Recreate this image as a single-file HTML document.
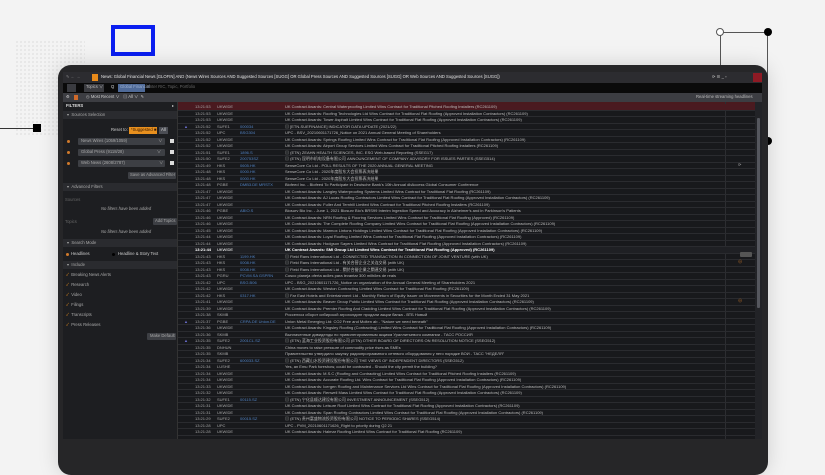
<!DOCTYPE html>
<html><head><meta charset="utf-8"><style>
*{margin:0;padding:0;box-sizing:border-box}
body{width:825px;height:464px;background:#f3f3f3;overflow:hidden;position:relative;font-family:"Liberation Sans","Noto Sans CJK SC",sans-serif}
.a{position:absolute}
.dots{left:15px;top:40px;width:70px;height:95px;background-image:radial-gradient(#c8c8c8 0.6px,transparent 0.8px);background-size:4px 4px}
.frame{left:58px;top:65px;width:710px;height:410px;background:#262628;border-radius:13px;box-shadow:0 0 20px rgba(0,0,0,.15)}
.t{font-size:4.2px;color:#b8b8b8;white-space:nowrap;line-height:6.5px}
.row{position:absolute;left:0;width:577px;height:6.5px;border-bottom:0.5px solid #2a2b2f}
.row span{position:absolute;top:0;font-size:4px;line-height:6.3px;color:#a8a8a8;white-space:nowrap}
.row .tm{left:17px}.row .sr{left:39px}.row .cd{left:62px;color:#4f80c0}.row .hl{left:107px;color:#bcbcbc}
.lp .t{color:#a8a8a8}
.sel{height:7px;background:#3d3f44;border-radius:1px}
</style></head><body>
<div class="a dots"></div>
<div class="a" style="left:111px;top:25px;width:44px;height:31px;border:4px solid #0a1ef0"></div>
<div class="a" style="left:0;top:128px;width:35px;height:1px;background:#333"></div>
<div class="a" style="left:33px;top:124px;width:8px;height:8px;background:#000"></div>
<div class="a" style="left:720px;top:32px;width:1px;height:35px;background:#555"></div>
<div class="a" style="left:720px;top:32px;width:48px;height:1px;background:#555"></div>
<div class="a" style="left:767px;top:32px;width:1px;height:110px;background:#555"></div>
<div class="a" style="left:716px;top:28px;width:8px;height:8px;border:1px solid #555;border-radius:50%;background:#fff"></div>
<div class="a" style="left:764px;top:28px;width:8px;height:8px;background:#000;border-radius:50%"></div>
<div class="a" style="left:764px;top:137px;width:8px;height:8px;background:#000;border-radius:50%"></div>
<div class="a" style="left:755px;top:140px;width:12px;height:1px;background:#555"></div>
<div class="a frame"></div>
<!-- title bar -->
<div class="a" style="left:63px;top:72px;width:699px;height:11px;background:#2c2c30"></div>
<div class="a t" style="left:66px;top:74px;color:#888">✎ ← →</div>
<div class="a" style="left:92px;top:74px;width:6px;height:7px;background:#e88a1a"></div>
<div class="a t" style="left:101px;top:74px;color:#e0e0e0">News: Global Financial News [GLOFIN] AND (News Wires Sources AND Suggested Sources [SUGG] OR Global Press Sources AND Suggested Sources [SUGG] OR Web Sources AND Suggested Sources [SUGG])</div>
<div class="a t" style="left:712px;top:74px;color:#ccc">⟳ ☰ _ ▫</div>
<div class="a" style="left:753px;top:73px;width:9px;height:9px;background:#8e1a24"></div>
<!-- search -->
<div class="a" style="left:63px;top:83px;width:699px;height:10px;background:#0a0a0a"></div>
<div class="a" style="left:67px;top:84px;width:9px;height:8px;background:#3a3b40"></div>
<div class="a" style="left:84px;top:84px;width:20px;height:8px;background:#3a3b40"></div>
<div class="a t" style="left:86px;top:84px;">Topics ∨</div>
<div class="a t" style="left:111px;top:84px;color:#ddd">Q</div>
<div class="a" style="left:118px;top:84px;width:27px;height:8px;background:#4f6a98"></div>
<div class="a t" style="left:120px;top:84px;color:#9bb0d0">Global Financial</div>
<div class="a t" style="left:147px;top:84px;color:#666">Enter RIC, Topic, Portfolio</div>
<!-- toolbar -->
<div class="a" style="left:63px;top:93px;width:699px;height:9px;background:#3c3d42"></div>
<div class="a t" style="left:66px;top:94px;color:#ddd">⚙</div>
<div class="a" style="left:74px;top:95px;width:4px;height:5px;background:#d06a2a"></div>
<div class="a t" style="left:86px;top:94px;color:#ccc">◷ Most Recent ∨ &nbsp; ▤ All ∨ &nbsp;✎</div>
<div class="a t" style="left:696px;top:94px;color:#bbb">Real-time streaming headlines</div>
<!-- left panel -->
<div class="a lp" style="left:63px;top:102px;width:115px;height:337px;background:#1d1e21;border-right:1px solid #333;overflow:hidden">
  <div class="a t" style="left:3px;top:1px;color:#ddd;font-weight:bold">FILTERS</div>
  <div class="a t" style="left:109px;top:1px;color:#ccc">▸</div>
  <div class="a" style="left:0;top:9px;width:115px;height:8px;background:#2a2b2f"></div>
  <div class="a t" style="left:4px;top:10px">▾ &nbsp;Sources Selection</div>
  <div class="a t" style="left:48px;top:25px;color:#ccc">Reset to:</div>
  <div class="a" style="left:66px;top:25px;width:28px;height:7px;background:#e8901e"></div>
  <div class="a t" style="left:68px;top:25px;color:#3a1a00">*Suggested ■</div>
  <div class="a" style="left:96px;top:25px;width:9px;height:7px;background:#4b4d54"></div>
  <div class="a t" style="left:98px;top:25px;color:#ddd">All</div>
  <div class="a" style="left:4px;top:38px;width:3px;height:3px;border-radius:50%;background:#d07a2a"></div>
  <div class="a sel" style="left:15px;top:36px;width:87px"></div><div class="a t" style="left:18px;top:36px">News Wires (1059/1059) <span style="margin-left:30px">∨</span></div>
  <div class="a" style="left:107px;top:37px;width:4px;height:4px;background:#ddd"></div>
  <div class="a" style="left:4px;top:49px;width:3px;height:3px;border-radius:50%;background:#d07a2a"></div>
  <div class="a sel" style="left:15px;top:47px;width:87px"></div><div class="a t" style="left:18px;top:47px">Global Press (9118/28) <span style="margin-left:32px">∨</span></div>
  <div class="a" style="left:107px;top:48px;width:4px;height:4px;background:#ddd"></div>
  <div class="a" style="left:4px;top:60px;width:3px;height:3px;border-radius:50%;background:#d07a2a"></div>
  <div class="a sel" style="left:15px;top:58px;width:87px"></div><div class="a t" style="left:18px;top:58px">Web News (2608/2787) <span style="margin-left:33px">∨</span></div>
  <div class="a" style="left:107px;top:59px;width:4px;height:4px;background:#ddd"></div>
  <div class="a sel" style="left:65px;top:70px;width:48px"></div><div class="a t" style="left:67px;top:70px">Save as Advanced Filter</div>
  <div class="a" style="left:0;top:81px;width:115px;height:8px;background:#2a2b2f"></div>
  <div class="a t" style="left:4px;top:82px">▾ &nbsp;Advanced Filters</div>
  <div class="a t" style="left:2px;top:95px;color:#666">Sources</div>
  <div class="a t" style="left:38px;top:104px;font-style:italic">No filters have been added</div>
  <div class="a t" style="left:2px;top:117px;color:#666">Topics</div>
  <div class="a sel" style="left:90px;top:116px;width:24px"></div><div class="a t" style="left:92px;top:116px">Add Topics</div>
  <div class="a t" style="left:38px;top:127px;font-style:italic">No filters have been added</div>
  <div class="a" style="left:0;top:137px;width:115px;height:8px;background:#2a2b2f"></div>
  <div class="a t" style="left:4px;top:138px">▾ &nbsp;Search Mode</div>
  <div class="a" style="left:3px;top:151px;width:3px;height:3px;border-radius:50%;background:#d07a2a"></div>
  <div class="a t" style="left:8px;top:149px;color:#ccc">Headlines</div>
  <div class="a" style="left:49px;top:151px;width:3px;height:3px;border-radius:50%;background:#000"></div>
  <div class="a t" style="left:55px;top:149px;color:#ccc">Headline &amp; Story Text</div>
  <div class="a" style="left:0;top:159px;width:115px;height:8px;background:#2a2b2f"></div>
  <div class="a t" style="left:4px;top:160px">▾ &nbsp;Include</div>
  <div class="a t" style="left:3px;top:170px"><span style="color:#e8901e">✓</span> &nbsp;Breaking News Alerts</div>
  <div class="a t" style="left:3px;top:180px"><span style="color:#e8901e">✓</span> &nbsp;Research</div>
  <div class="a t" style="left:3px;top:190px"><span style="color:#e8901e">✓</span> &nbsp;Video</div>
  <div class="a t" style="left:3px;top:200px"><span style="color:#e8901e">✓</span> &nbsp;Filings</div>
  <div class="a t" style="left:3px;top:210px"><span style="color:#e8901e">✓</span> &nbsp;Transcripts</div>
  <div class="a t" style="left:3px;top:220px"><span style="color:#e8901e">✓</span> &nbsp;Press Releases</div>
  <div class="a sel" style="left:84px;top:231px;width:29px"></div><div class="a t" style="left:87px;top:231px">Make Default</div>
</div>
<!-- list -->
<div class="a" style="left:178px;top:102px;width:577px;height:337px;background:#18191c;overflow:hidden">
<div class="a" style="left:0;top:0;width:577px;height:2px;background:#4a1a1e"></div>
<div class="a" style="left:547px;top:0;width:1px;height:337px;background:#2c2d31"></div>
<div class="a" style="top:2px;left:0;width:577px;height:335px">
<div class="row" style="top:0;background:#4a1a20"><span class="tm">13:21:53</span><span class="sr">UKWIDE</span><span class="hl">UK Contract Awards: Central Waterproofing Limited Wins Contract for Traditional Pitched Roofing Installers (RC261109)</span></div>
<div class="row" style="top:6.5px"><span class="tm">13:21:53</span><span class="sr">UKWIDE</span><span class="hl">UK Contract Awards: Roofing Technologies Ltd Wins Contract for Traditional Flat Roofing (Approved Installation Contractors) (RC261109)</span></div>
<div class="row" style="top:13px"><span class="tm">13:21:53</span><span class="sr">UKWIDE</span><span class="hl">UK Contract Awards: Tower Asphalt Limited Wins Contract for Traditional Flat Roofing (Approved Installation Contractors) (RC261109)</span></div>
<div class="row" style="top:19.5px"><span style="left:6px;color:#6a6fd0">▲</span><span class="tm">13:21:52</span><span class="sr">SUFE1</span><span class="cd">000034</span><span class="hl">▤ [ETN-SUEFINANCE] INDICATOR DATA UPDATE (2021/22)</span></div>
<div class="row" style="top:26px"><span class="tm">13:21:52</span><span class="sr">UPC</span><span class="cd">BSG304</span><span class="hl">UPC - BSV_20210601171726_Notice on 2021 Annual General Meeting of Shareholders</span></div>
<div class="row" style="top:32.5px"><span class="tm">13:21:52</span><span class="sr">UKWIDE</span><span class="hl">UK Contract Awards: Springs Roofing Limited Wins Contract for Traditional Flat Roofing (Approved Installation Contractors) (RC261109)</span></div>
<div class="row" style="top:39px"><span class="tm">13:21:52</span><span class="sr">UKWIDE</span><span class="hl">UK Contract Awards: Airport Group Services Limited Wins Contract for Traditional Pitched Roofing Installers (RC261109)</span></div>
<div class="row" style="top:45.5px"><span class="tm">13:21:51</span><span class="sr">SUFE1</span><span class="cd">1896.S</span><span class="hl">▤ (ETN) ZEAHN HEALTH SCIENCES, INC. ESG Web-based Reporting (SSEG17)</span></div>
<div class="row" style="top:52px"><span class="tm">13:21:50</span><span class="sr">SUFE2</span><span class="cd">200753SZ</span><span class="hl">▤ (ETN) 昆明市机电设备有限公司 ANNOUNCEMENT OF COMPANY ADVISORY FOR ISSUES PARTIES (SSEG514)</span></div>
<div class="row" style="top:58.5px"><span class="tm">13:21:49</span><span class="sr">HKS</span><span class="cd">0605.HK</span><span class="hl">SenseCore Co Ltd - POLL RESULTS OF THE 2020 ANNUAL GENERAL MEETING</span></div>
<div class="row" style="top:65px"><span class="tm">13:21:48</span><span class="sr">HKS</span><span class="cd">0000.HK</span><span class="hl">SenseCore Co Ltd - 2020年度股东大会投票表决结果</span></div>
<div class="row" style="top:71.5px"><span class="tm">13:21:48</span><span class="sr">HKS</span><span class="cd">0000.HK</span><span class="hl">SenseCore Co Ltd - 2020年度股东大会投票表决结果</span></div>
<div class="row" style="top:78px"><span class="tm">13:21:48</span><span class="sr">PGBE</span><span class="cd">DMB3.DE MRSTX</span><span class="hl">Biofeed Inc. - Biofeed To Participate in Deutsche Bank's 10th Annual dbAccess Global Consumer Conference</span></div>
<div class="row" style="top:84.5px"><span class="tm">13:21:47</span><span class="sr">UKWIDE</span><span class="hl">UK Contract Awards: Langley Waterproofing Systems Limited Wins Contract for Traditional Flat Roofing (RC261109)</span></div>
<div class="row" style="top:91px"><span class="tm">13:21:47</span><span class="sr">UKWIDE</span><span class="hl">UK Contract Awards: AJ Lucas Roofing Contractors Limited Wins Contract for Traditional Flat Roofing (Approved Installation Contractors) (RC261109)</span></div>
<div class="row" style="top:97.5px"><span class="tm">13:21:47</span><span class="sr">UKWIDE</span><span class="hl">UK Contract Awards: Fuller And Ternhill Limited Wins Contract for Traditional Pitched Roofing Installers (RC261109)</span></div>
<div class="row" style="top:104px"><span class="tm">13:21:46</span><span class="sr">PGBE</span><span class="cd">ABIO.S</span><span class="hl">Biosurv Bio Inc. - June 1, 2021 Biosurv Bio's BRS99 Interim Ingestion Speed and Accuracy in Alzheimer's and in Parkinson's Patients</span></div>
<div class="row" style="top:110.5px"><span class="tm">13:21:46</span><span class="sr">UKWIDE</span><span class="hl">UK Contract Awards: NRN Roofing &amp; Flooring Services Limited Wins Contract for Traditional Flat Roofing (Approved) (RC261109)</span></div>
<div class="row" style="top:117px"><span class="tm">13:21:46</span><span class="sr">UKWIDE</span><span class="hl">UK Contract Awards: The Complete Roofing Company Limited Wins Contract for Traditional Flat Roofing (Approved Installation Contractors) (RC261109)</span></div>
<div class="row" style="top:123.5px"><span class="tm">13:21:45</span><span class="sr">UKWIDE</span><span class="hl">UK Contract Awards: Marmox Lintons Holdings Limited Wins Contract for Traditional Flat Roofing (Approved Installation Contractors) (RC261109)</span></div>
<div class="row" style="top:130px"><span class="tm">13:21:44</span><span class="sr">UKWIDE</span><span class="hl">UK Contract Awards: Loyal Roofing Limited Wins Contract for Traditional Flat Roofing (Approved Installation Contractors) (RC261109)</span></div>
<div class="row" style="top:136.5px"><span class="tm">13:21:44</span><span class="sr">UKWIDE</span><span class="hl">UK Contract Awards: Hodgson Sayers Limited Wins Contract for Traditional Flat Roofing (Approved Installation Contractors) (RC261109)</span></div>
<div class="row" style="top:143px;background:#1f2024"><span class="tm" style="color:#fff;font-weight:bold">13:21:44</span><span class="sr" style="color:#fff">UKWIDE</span><span class="hl" style="color:#fff;font-weight:bold">UK Contract Awards: SMI Group Ltd Limited Wins Contract for Traditional Flat Roofing (Approved) (RC261109)</span></div>
<div class="row" style="top:149.5px"><span class="tm">13:21:43</span><span class="sr">HKS</span><span class="cd">1199.HK</span><span class="hl">▤ Field Rans International Ltd - CONNECTED TRANSACTION IN CONNECTION OF JOINT VENTURE (with UK)</span></div>
<div class="row" style="top:156px"><span class="tm">13:21:43</span><span class="sr">HKS</span><span class="cd">0008.HK</span><span class="hl">▤ Field Rans International Ltd - 有关合营企业之关连交易 (with UK)</span></div>
<div class="row" style="top:162.5px"><span class="tm">13:21:43</span><span class="sr">HKS</span><span class="cd">0008.HK</span><span class="hl">▤ Field Rans International Ltd - 關於合營企業之關連交易 (with UK)</span></div>
<div class="row" style="top:169px"><span class="tm">13:21:43</span><span class="sr">PGRU</span><span class="cd">PCVM.SA GSPRN</span><span class="hl">Cosco planeja oferta acões para levantar 300 milhões de reais</span></div>
<div class="row" style="top:175.5px"><span class="tm">13:21:42</span><span class="sr">UPC</span><span class="cd">BSG.B06</span><span class="hl">UPC - BSG_20210601171726_Notice on organization of the Annual General Meeting of Shareholders 2021</span></div>
<div class="row" style="top:182px"><span class="tm">13:21:42</span><span class="sr">UKWIDE</span><span class="hl">UK Contract Awards: Weston Contracting Limited Wins Contract for Traditional Flat Roofing (RC261109)</span></div>
<div class="row" style="top:188.5px"><span class="tm">13:21:42</span><span class="sr">HKS</span><span class="cd">0317.HK</span><span class="hl">▤ Far East Hotels and Entertainment Ltd - Monthly Return of Equity Issuer on Movements in Securities for the Month Ended 31 May 2021</span></div>
<div class="row" style="top:195px"><span class="tm">13:21:41</span><span class="sr">UKWIDE</span><span class="hl">UK Contract Awards: Beaver Group Public Limited Wins Contract for Traditional Flat Roofing (Approved Installation Contractors) (RC261109)</span></div>
<div class="row" style="top:201.5px"><span class="tm">13:21:39</span><span class="sr">UKWIDE</span><span class="hl">UK Contract Awards: Premier Roofing And Cladding Limited Wins Contract for Traditional Flat Roofing (Approved Installation Contractors) (RC261109)</span></div>
<div class="row" style="top:208px"><span class="tm">13:21:38</span><span class="sr">SKMB</span><span class="hl">Росселхоз оборот сибирской агрохолдинг продали акции банка - ВТБ Новый</span></div>
<div class="row" style="top:214.5px"><span style="left:6px;color:#6a6fd0">▲</span><span class="tm">13:21:37</span><span class="sr">PGBE</span><span class="cd">CRPA.DE Union.DE</span><span class="hl">Union Metal Emerging Ltd: CO2 Free and Molten ab - "Nature we need beneath"</span></div>
<div class="row" style="top:221px"><span class="tm">13:21:36</span><span class="sr">UKWIDE</span><span class="hl">UK Contract Awards: Kingsley Roofing (Contracting) Limited Wins Contract for Traditional Flat Roofing (Approved Installation Contractors) (RC261109)</span></div>
<div class="row" style="top:227.5px"><span class="tm">13:21:36</span><span class="sr">SKMB</span><span class="hl">Выплаченные дивиденды по привилегированным акциям Ураллитьевого компании - ТАСС РОССИЯ</span></div>
<div class="row" style="top:234px"><span style="left:6px;color:#6a6fd0">▲</span><span class="tm">13:21:35</span><span class="sr">SUFE2</span><span class="cd">2001CL.SZ</span><span class="hl">▤ (ETN) 蓝海工业投资股份有限公司 (ETN) OTHER BOARD OF DIRECTORS ON RESOLUTION NOTICE (SSEG512)</span></div>
<div class="row" style="top:240.5px"><span class="tm">13:21:35</span><span class="sr">DNHUN</span><span class="hl">China moves to raise pressure of commodity price rises as SMEs</span></div>
<div class="row" style="top:247px"><span class="tm">13:21:35</span><span class="sr">SKMB</span><span class="hl">Правительство утвердило закупку радиопрограммного сетевого оборудования у него порядке ВОИ - ТАСС "НЕДЕЛЯ"</span></div>
<div class="row" style="top:253.5px"><span class="tm">13:21:34</span><span class="sr">SUFE2</span><span class="cd">600033.SZ</span><span class="hl">▤ (ETN) 西藏山水投资建设股份有限公司 THE VIEWS OF INDEPENDENT DIRECTORS (SSEG512)</span></div>
<div class="row" style="top:260px"><span class="tm">13:21:34</span><span class="sr">LUSHE</span><span class="hl">Yes, an Emu Park foreshow, could be contracted - Should the city permit the building?</span></div>
<div class="row" style="top:266.5px"><span class="tm">13:21:34</span><span class="sr">UKWIDE</span><span class="hl">UK Contract Awards: M.S.C (Roofing and Contracting) Limited Wins Contract for Traditional Pitched Roofing Installers (RC261109)</span></div>
<div class="row" style="top:273px"><span class="tm">13:21:34</span><span class="sr">UKWIDE</span><span class="hl">UK Contract Awards: Accurate Roofing Ltd. Wins Contract for Traditional Flat Roofing (Approved Installation Contractors) (RC261109)</span></div>
<div class="row" style="top:279.5px"><span class="tm">13:21:33</span><span class="sr">UKWIDE</span><span class="hl">UK Contract Awards: Icergen Roofing and Maintenance Services Ltd Wins Contract for Traditional Flat Roofing (Approved Installation Contractors) (RC261109)</span></div>
<div class="row" style="top:286px"><span class="tm">13:21:32</span><span class="sr">UKWIDE</span><span class="hl">UK Contract Awards: Renwell Mass Limited Wins Contract for Traditional Flat Roofing (Approved Installation Contractors) (RC261109)</span></div>
<div class="row" style="top:292.5px"><span class="tm">13:21:32</span><span class="sr">SUFE1</span><span class="cd">00115.SZ</span><span class="hl">▤ (ETN) 宁化县顺达建设有限公司 INVESTMENT ANNOUNCEMENT (SSEG512)</span></div>
<div class="row" style="top:299px"><span class="tm">13:21:31</span><span class="sr">UKWIDE</span><span class="hl">UK Contract Awards: Leisure Roof Limited Wins Contract for Traditional Flat Roofing (Approved Installation Contractors) (RC261109)</span></div>
<div class="row" style="top:305.5px"><span class="tm">13:21:31</span><span class="sr">UKWIDE</span><span class="hl">UK Contract Awards: Span Roofing Contractors Limited Wins Contract for Traditional Flat Roofing (Approved Installation Contractors) (RC261109)</span></div>
<div class="row" style="top:312px"><span class="tm">13:21:29</span><span class="sr">SUFE2</span><span class="cd">00015.SZ</span><span class="hl">▤ (ETN) 贵州富盛物流投资股份有限公司 NOTICE TO PERIODIC SHARES (SSEG514)</span></div>
<div class="row" style="top:318.5px"><span class="tm">13:21:28</span><span class="sr">UPC</span><span class="hl">UPC - PVM_20210601171626_Right to priority during Q2 21</span></div>
<div class="row" style="top:325px"><span class="tm">13:21:28</span><span class="sr">UKWIDE</span><span class="hl">UK Contract Awards: Halmar Roofing Limited Wins Contract for Traditional Flat Roofing (RC261109)</span></div>
</div>
<div class="a t" style="left:560px;top:60px;color:#aaa">⟳</div>
<div class="a" style="left:562px;top:150px;width:12px;height:5px;background:#555;border-radius:1px"></div>
<div class="a t" style="left:560px;top:157px;color:#d07a2a">⊖</div>
<div class="a t" style="left:560px;top:196px;color:#d07a2a">⊖</div>
</div>
<!-- scrollbar -->
<div class="a" style="left:755px;top:102px;width:7px;height:337px;background:#222327"></div>
<div class="a" style="left:757px;top:118px;width:2.5px;height:190px;background:#55575e;border-radius:1px"></div>
</body></html>
